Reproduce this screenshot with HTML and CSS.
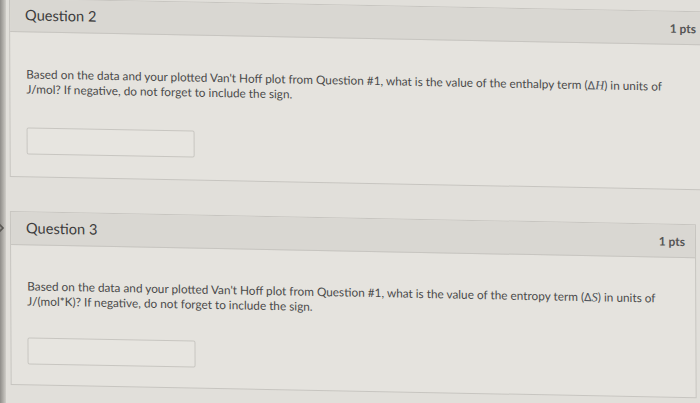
FILE: index.html
```html
<!DOCTYPE html>
<html lang="en">
<head>
<meta charset="utf-8">
<title>Quiz</title>
<link rel="stylesheet" href="styles.css">
</head>
<body>
<div class="screen">
  <div class="edge">
    <svg class="chev" width="6" height="10" viewBox="0 0 6 10"><path d="M0 1 L4 5 L0 9" fill="none" stroke="#5a5854" stroke-width="1.6"/></svg>
  </div>
  <main class="quiz">
    <section class="question q2">
      <header class="q-head">
        <h3 class="q-title">Question 2</h3>
        <span class="q-pts">1 pts</span>
      </header>
      <div class="q-body">
        <p class="q-text">Based on the data and your plotted Van't Hoff plot from Question #1, what is the value of the enthalpy term (<span class="math"><span class="delta">Δ</span><i>H</i></span>) in units of<br>J/mol? If negative, do not forget to include the sign.</p>
        <input class="answer" type="text" aria-label="Answer for question 2">
      </div>
    </section>
    <section class="question q3">
      <header class="q-head">
        <h3 class="q-title">Question 3</h3>
        <span class="q-pts">1 pts</span>
      </header>
      <div class="q-body">
        <p class="q-text">Based on the data and your plotted Van't Hoff plot from Question #1, what is the value of the entropy term (<span class="math"><span class="delta">Δ</span><i>S</i></span>) in units of<br>J/(mol*K)? If negative, do not forget to include the sign.</p>
        <input class="answer" type="text" aria-label="Answer for question 3">
      </div>
    </section>
  </main>
</div>
</body>
</html>
```
FILE: styles.css
```css
html, body {
  margin: 0;
  height: 100%;
  overflow: hidden;
  background: #e1dfda;
}
body {
  font-family: Lato, "Open Sans", "Liberation Sans", sans-serif;
  color: #4a4a4a;
}
.screen {
  display: flex;
  height: 403px;
}
.edge {
  width: 6px;
  flex: none;
  background: linear-gradient(90deg, #8f8d89, #b5b3ae 60%, #d0cec9);
  display: flex;
  flex-direction: column;
}
.chev {
  margin-top: 223px;
  margin-left: -1px;
}
.quiz {
  flex: 1;
  min-width: 0;
  padding-left: 3px;
  transform: skew(0.25deg, 1.1deg);
  transform-origin: 0 0;
}
.question {
  background: #e5e3de;
  border: 1px solid #c7c5c0;
}
.q2 {
  margin: -2px -12px 0 0;
}
.q3 {
  margin: 34px 5px 0 0;
}
.q-head {
  display: flex;
  justify-content: space-between;
  align-items: center;
  height: 32px;
  padding: 0 10px 0 15px;
  background: #d9d7d2;
  border-bottom: 1px solid #c7c5c0;
}
.q2 .q-head {
  padding-right: 15px;
}
.q-title {
  margin: 0;
  font-size: 14.6px;
  font-weight: 400;
  line-height: 1;
  color: #3c3c3c;
}
.q-pts {
  font-size: 12px;
  font-weight: 700;
  color: #555;
}
.q-body {
  padding: 33px 16px 20px 16px;
  display: flex;
  flex-direction: column;
  gap: 29px;
  align-items: flex-start;
}
.q2 .q-body {
  padding-top: 34px;
  padding-bottom: 22px;
  gap: 31px;
}
.q-text {
  margin: 0;
  font-size: 11.8px;
  line-height: 15px;
  color: #4b4b4b;
  white-space: nowrap;
}
.math {
  font-family: "Liberation Serif", "DejaVu Serif", serif;
  font-size: 12.5px;
  line-height: 1;
  color: #50555c;
}
.delta {
  font-family: "DejaVu Sans", sans-serif;
  font-size: 11px;
  line-height: 1;
}
.answer {
  display: block;
  box-sizing: border-box;
  width: 168px;
  height: 27px;
  margin: 0;
  padding: 0 6px;
  border: 1px solid #c8c6c1;
  border-radius: 2px;
  background: #e7e5e0;
  font: inherit;
}
```
